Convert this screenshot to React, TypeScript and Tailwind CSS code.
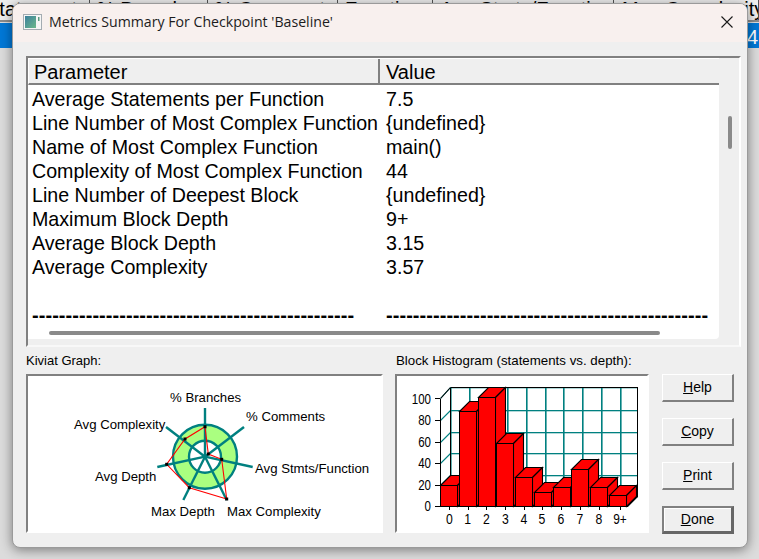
const rows = [
  ["Average Statements per Function", "7.5"],
  ["Line Number of Most Complex Function", "{undefined}"],
  ["Name of Most Complex Function", "main()"],
  ["Complexity of Most Complex Function", "44"],
  ["Line Number of Deepest Block", "{undefined}"],
  ["Maximum Block Depth", "9+"],
  ["Average Block Depth", "3.15"],
  ["Average Complexity", "3.57"],
  ["\u00a0", ""],
];
const dashes = "-".repeat(48);

const backdropCols = [
  { w: "w-[104px] -ml-[14px]", label: "Statements" },
  { w: "w-[118px] pl-[7px]", label: "% Branches" },
  { w: "w-[130px] pl-[7px]", label: "% Comments" },
  { w: "w-[95px] pl-[7px]", label: "Functions" },
  { w: "w-[181px] pl-[7px]", label: "Avg Stmts/Function" },
  { w: "w-[145px] pl-[8px]", label: "Max Complexity" },
];

const spokes = [
  [205, 408],
  [244, 427],
  [252.7, 467],
  [226.7, 500],
  [183.3, 500],
  [157.3, 467],
  [166, 427],
];

const kiviatPoints = [
  [205, 426.7],
  [208.3, 454],
  [221.7, 459.3],
  [226.7, 499],
  [189.3, 487.7],
  [166.7, 464.3],
  [185, 439],
];

const kiviatLabels = [
  { x: 170, y: 402, t: "% Branches" },
  { x: 246, y: 421, t: "% Comments" },
  { x: 255, y: 473, t: "Avg Stmts/Function" },
  { x: 227, y: 516, t: "Max Complexity" },
  { x: 151, y: 516, t: "Max Depth" },
  { x: 95, y: 481, t: "Avg Depth" },
  { x: 74, y: 429, t: "Avg Complexity" },
];

const barTops = [485.5, 411.5, 397.5, 443.5, 477.5, 492.5, 487.5, 469.5, 487.5, 495.5];
const barLefts = [440.5, 459.5, 478.5, 496.5, 515.5, 534.5, 553.5, 571.5, 590.5, 609.5];
const xLabels = ["0", "1", "2", "3", "4", "5", "6", "7", "8", "9+"];
const xCenters = [449.3, 467.7, 486.3, 505.3, 524, 542, 561, 580, 599, 620];
const gridY = [387.5, 410.5, 432.5, 453.5, 475.5, 496.5];
const frontY = [398.5, 420.5, 442.5, 463.5, 485.5, 506.5];
const yLabels = ["100", "80", "60", "40", "20", "0"];
const buttons = [
  { k: "H", rest: "elp", isDefault: false },
  { k: "C", rest: "opy", isDefault: false },
  { k: "P", rest: "rint", isDefault: false },
  { k: "D", rest: "one", isDefault: true },
];

function KiviatGraph() {
  return (
    <svg viewBox="28 376 353 155" width="353" height="155" className="block">
      <circle cx="205" cy="456.7" r="24" fill="none" stroke="#aaff80" strokeWidth="16" />
      <circle cx="205" cy="456.7" r="32" fill="none" stroke="#008080" strokeWidth="2.4" />
      <circle cx="205" cy="456.7" r="16" fill="none" stroke="#008080" strokeWidth="2.4" />
      {spokes.map(([x, y]) => (
        <line key={x} x1="205" y1="456.7" x2={x} y2={y} stroke="#008080" strokeWidth="2.4" />
      ))}
      <polygon
        points={kiviatPoints.map((p) => p.join(",")).join(" ")}
        fill="none"
        stroke="#ff0000"
        strokeWidth="1.1"
      />
      {kiviatPoints.map(([x, y]) => (
        <rect key={x} x={x - 1.5} y={y - 1.5} width="3" height="3" fill="#000" />
      ))}
      {kiviatLabels.map((l) => (
        <text key={l.t} x={l.x} y={l.y} fontSize="13.2" fill="#000">
          {l.t}
        </text>
      ))}
    </svg>
  );
}

function BlockHistogram() {
  return (
    <svg viewBox="397 376 250 155" width="250" height="155" className="block">
      {/* back wall grid */}
      <g fill="#008080">
        {gridY.map((y) => (
          <rect key={y} x="450" y={y - 0.5} width="188" height="1.3" />
        ))}
        {Array.from({ length: 10 }).map((_, i) => (
          <rect key={i} x={Math.round(450 + i * 18.9)} y="387" width="1.6" height="110" />
        ))}
      </g>
      {gridY.map((y, i) => (
        <line key={y} x1="440.5" y1={frontY[i]} x2="450.5" y2={y} stroke="#008080" strokeWidth="1.1" />
      ))}
      <g shapeRendering="crispEdges" stroke="#000" strokeWidth="1">
        <line x1="450.5" y1="387.5" x2="637.5" y2="387.5" />
        <line x1="637.5" y1="387.5" x2="637.5" y2="496.5" />
        <line x1="450.5" y1="387.5" x2="450.5" y2="496.5" />
      </g>
      <line x1="440.5" y1="398.5" x2="450.5" y2="387.5" stroke="#000" strokeWidth="1.1" />
      {/* bars */}
      {barTops.map((top, i) => {
        const x = barLefts[i];
        const r = x + 17;
        return (
          <g key={i} fill="#ff0000" stroke="#000" strokeWidth="1.1">
            <polygon points={`${x},${top} ${x + 10},${top - 10} ${r + 10},${top - 10} ${r},${top}`} />
            <polygon points={`${r},${top} ${r + 10},${top - 10} ${r + 10},496.5 ${r},506.5`} />
            <rect x={x} y={top} width="17" height={506.5 - top} shapeRendering="crispEdges" />
          </g>
        );
      })}
      {/* axes */}
      <g shapeRendering="crispEdges" stroke="#000" strokeWidth="1">
        <line x1="440.5" y1="398.5" x2="440.5" y2="506.5" />
        <line x1="435" y1="506.5" x2="627.5" y2="506.5" />
        {frontY.map((y) => (
          <line key={y} x1="435" y1={y} x2="440" y2={y} />
        ))}
        {xCenters.map((x) => (
          <line key={x} x1={Math.round(x) + 0.5} y1="506" x2={Math.round(x) + 0.5} y2="510" />
        ))}
      </g>
      <line x1="627.5" y1="506.5" x2="637.5" y2="496.5" stroke="#000" strokeWidth="1.1" />
      {yLabels.map((t, i) => (
        <text
          key={t}
          x="431"
          y={[404, 425, 447, 468, 490, 511][i]}
          fontSize="14"
          fill="#000"
          textAnchor="end"
          textLength={t.length * 6.4}
          lengthAdjust="spacingAndGlyphs"
        >
          {t}
        </text>
      ))}
      {xLabels.map((t, i) => (
        <text
          key={t}
          x={xCenters[i]}
          y="524"
          fontSize="14"
          fill="#000"
          textAnchor="middle"
          textLength={t.length * 6.8}
          lengthAdjust="spacingAndGlyphs"
        >
          {t}
        </text>
      ))}
    </svg>
  );
}

export default function App() {
  return (
    <div className="relative h-[559px] w-[759px] overflow-hidden bg-[#dcdcdc] font-['Liberation_Sans',Arial,sans-serif] text-black">
      {/* grid behind the dialog */}
      <div className="-mt-[5px] flex h-[27px] overflow-hidden border-b-2 border-[#8c8c8c] bg-[#efefef] text-[20px] leading-[28px]">
        {backdropCols.map((c) => (
          <div key={c.label} className={`${c.w} shrink-0 overflow-hidden whitespace-nowrap border-r border-[#555]`}>
            {c.label}
          </div>
        ))}
      </div>
      <div className="mt-[1px] flex h-[25px] items-end justify-end bg-[#0078d7] pr-[1px] text-[20px] leading-[22px] text-white">4</div>

      {/* dialog */}
      <div className="absolute left-[12px] top-[3px] flex h-[545px] w-[736px] flex-col overflow-hidden rounded-lg border border-[#9a9a9a] bg-[#efefef] shadow-[0_2px_12px_rgba(0,0,0,0.45)]">
        <div className="flex h-[38px] shrink-0 items-center bg-[#f8f0ee] pb-[2px] pl-[10px] pr-[14px]">
          <svg width="19" height="16" viewBox="0 0 19 16" className="mr-[7px] shrink-0">
            <defs>
              <linearGradient id="ic" x1="0" y1="0" x2="1" y2="1">
                <stop offset="0" stopColor="#3c7f9c" />
                <stop offset="1" stopColor="#6cb98c" />
              </linearGradient>
            </defs>
            <rect x="0.5" y="0.5" width="18" height="15" fill="#f6f6f6" stroke="#a4acb2" />
            <rect x="2" y="2" width="11" height="12" fill="url(#ic)" />
            <rect x="15" y="3" width="1.5" height="4" fill="#5a9a80" />
          </svg>
          <span className="font-['Open_Sans',sans-serif] text-[14.15px] text-[#1c1c1c]">Metrics Summary For Checkpoint 'Baseline'</span>
          <svg width="12" height="12" viewBox="0 0 12 12" className="ml-auto shrink-0">
            <path d="M0.5 0.5 L11.5 11.5 M11.5 0.5 L0.5 11.5" stroke="#1a1a1a" strokeWidth="1.1" />
          </svg>
        </div>

        <div className="flex flex-1 flex-col px-[13px] pt-[14px]">
          {/* parameter list */}
          <div className="relative h-[291px] w-[715px] border-t-2 border-l-2 border-[#808080] border-r-2 border-r-white border-b-2 border-b-[#f8f8f8]">
            <div className="h-[281px] w-[691px] overflow-hidden rounded-br-sm bg-white">
              <div className="flex h-[27px] border-t border-l border-white border-b-2 border-b-[#808080] bg-[#efefef] text-[20px] leading-[26px]">
                <div className="w-[351px] border-r-2 border-r-[#808080] pl-[5px]">Parameter</div>
                <div className="pl-[6px]">Value</div>
              </div>
              <div className="pt-[2px]">
                {rows.map(([name, value], i) => (
                  <div key={i} className="flex h-[24px] whitespace-nowrap text-[19.65px] leading-[24px]">
                    <div className="w-[358px] pl-[4px]">{name}</div>
                    <div>{value}</div>
                  </div>
                ))}
                <div className="flex h-[24px] whitespace-nowrap text-[20px] font-bold leading-[24px] tracking-[0.05px]">
                  <div className="w-[358px] pl-[4px]">{dashes}</div>
                  <div>{dashes}</div>
                </div>
              </div>
            </div>
            {/* scrollbars */}
            <div className="absolute left-[700px] top-[58px] h-[33px] w-[4px] rounded-sm bg-[#8a8a8a]" />
            <div className="absolute left-[21px] top-[273px] h-[4px] w-[611px] rounded-sm bg-[#8a8a8a]" />
          </div>

          {/* charts and buttons */}
          <div className="mt-[6px] flex">
            <div className="w-[357px]">
              <div className="h-[21px] text-[13px] leading-[16px]">Kiviat Graph:</div>
              <div className="h-[159px] border-2 border-t-[#808080] border-l-[#808080] border-r-white border-b-white bg-white">
                <KiviatGraph />
              </div>
            </div>
            <div className="ml-[12px] w-[254px]">
              <div className="h-[21px] pl-[1px] text-[13.3px] leading-[16px]">Block Histogram (statements vs. depth):</div>
              <div className="h-[159px] border-2 border-t-[#808080] border-l-[#808080] border-r-white border-b-white bg-white">
                <BlockHistogram />
              </div>
            </div>
            <div className="ml-[13px] flex w-[72px] flex-col gap-[16px] pt-[21px]">
              {buttons.map((b) => (
                <button
                  key={b.k}
                  className={
                    b.isDefault
                      ? "h-[28px] border-2 border-t-[#808080] border-l-[#808080] border-r-[3px] border-b-[3px] border-r-[#666] border-b-[#666] bg-[#efefef] text-[14px] shadow-[inset_1px_1px_0_#fff]"
                      : "h-[28px] border border-t-white border-l-white border-r-2 border-b-2 border-r-[#808080] border-b-[#808080] bg-[#efefef] text-[14px]"
                  }
                >
                  <span className="underline">{b.k}</span>
                  {b.rest}
                </button>
              ))}
            </div>
          </div>
        </div>
      </div>
    </div>
  );
}
